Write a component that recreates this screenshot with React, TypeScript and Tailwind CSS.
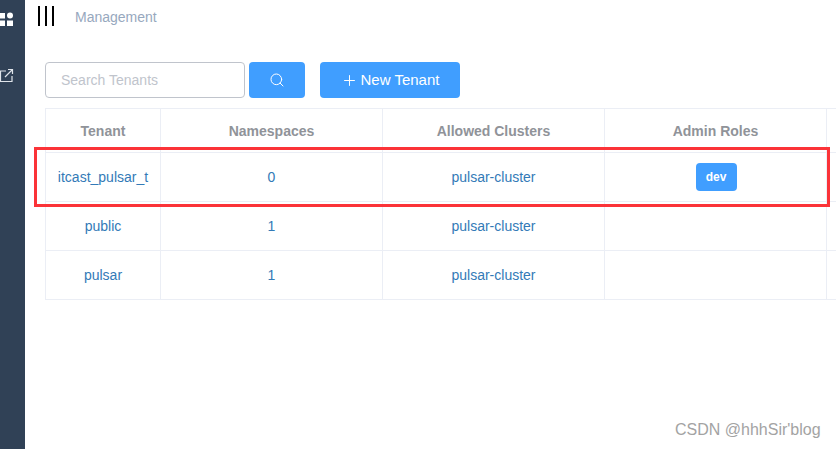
import { Search, Plus } from 'lucide-react'

const rows = [
  { tenant: 'itcast_pulsar_t', ns: '0', cluster: 'pulsar-cluster', role: 'dev' },
  { tenant: 'public', ns: '1', cluster: 'pulsar-cluster', role: '' },
  { tenant: 'pulsar', ns: '1', cluster: 'pulsar-cluster', role: '' },
]

const cell = 'flex items-center justify-center border-r border-b border-[#ebeef5]'

export default function App() {
  return (
    <div className="relative flex h-[449px] w-[836px] overflow-hidden bg-white font-['Liberation_Sans',sans-serif] text-sm">
      <aside className="flex w-[25px] shrink-0 flex-col bg-[#304156] pt-3">
        <svg width="25" height="15" viewBox="0 0 25 15" fill="#fff">
          <rect x="0" y="1" width="5" height="5.5" />
          <circle cx="10" cy="3.5" r="3" />
          <rect x="0" y="8.5" width="5" height="5.5" />
          <rect x="7" y="8.5" width="6" height="5.5" />
        </svg>
        <svg className="mt-[41px]" width="25" height="16" viewBox="0 0 25 16" fill="none" stroke="#dfe4ea" strokeWidth="1.2">
          <path d="M6 3H0.5v10.5h11.5V8" />
          <path d="M5 9l7-7M8 1.5h4.5V6" />
        </svg>
      </aside>

      <main className="min-w-0 flex-1">
        <header className="flex h-[34px] items-start">
          <div className="ml-[13px] mt-[6px] flex h-5 gap-[5px]">
            <span className="h-5 w-[2px] bg-black" />
            <span className="h-5 w-[2px] bg-black" />
            <span className="h-5 w-[2px] bg-black" />
          </div>
          <span className="ml-[21px] mt-[9px] text-sm leading-4 text-[#97a8be]">Management</span>
        </header>

        <div className="ml-5 mt-[28px] flex h-9 items-center">
          <div className="flex h-9 w-[200px] items-center rounded border border-[#c0c4cc] pl-[15px] text-[#c0c4cc]">
            Search Tenants
          </div>
          <button className="ml-1 flex h-9 w-14 items-center justify-center rounded bg-[#409eff] text-white">
            <Search size={16} strokeWidth={1.5} />
          </button>
          <button className="ml-[15px] flex h-9 w-[140px] items-center justify-center gap-[3px] rounded bg-[#409eff] text-[15px] text-white">
            <Plus size={17} strokeWidth={1.4} />
            New Tenant
          </button>
        </div>

        <div className="ml-5 mt-[10px] grid w-[791px] grid-cols-[115px_222px_222px_222px_10px] grid-rows-[44px_49px_49px_49px] border-t border-l border-[#ebeef5]">
          {['Tenant', 'Namespaces', 'Allowed Clusters', 'Admin Roles', ''].map((h, i) => (
            <div key={i} className={`${cell} font-bold text-[#909399]`}>
              {h}
            </div>
          ))}
          {rows.map((r) => (
            <div key={r.tenant} className="contents text-[#337ab7]">
              <div className={cell}>{r.tenant}</div>
              <div className={cell}>{r.ns}</div>
              <div className={cell}>{r.cluster}</div>
              <div className={cell}>
                {r.role && (
                  <span className="ml-px flex h-7 w-[41px] items-center justify-center rounded bg-[#409eff] text-xs font-bold text-white">
                    {r.role}
                  </span>
                )}
              </div>
              <div className={cell} />
            </div>
          ))}
        </div>
      </main>

      <div className="pointer-events-none absolute left-[34px] top-[147px] h-[60px] w-[796px] border-[3px] border-[#fb3338]" />
      <span className="absolute left-[675px] top-[421px] text-base leading-[18px] text-[#a3a3a3]">CSDN @hhhSir'blog</span>
    </div>
  )
}
